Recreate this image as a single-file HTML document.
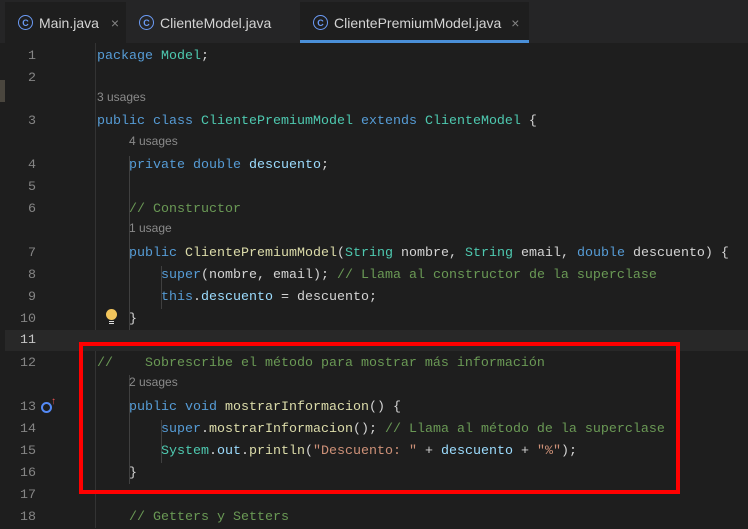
<!DOCTYPE html>
<html><head><style>
*{margin:0;padding:0;box-sizing:border-box}
body{width:748px;height:528px;overflow:hidden;background:#1e1e1e;font-family:"Liberation Mono",monospace;position:relative}
.tabs{position:absolute;left:0;top:0;width:748px;height:43px;background:#252526}
.tab{position:absolute;top:2px;height:41px;font:14px "Liberation Sans",sans-serif;color:#d4d4d4;display:flex;align-items:center}
.ic{width:15px;height:15px;border:1.5px solid #6b9bf5;border-radius:50%;color:#6b9bf5;font:bold 9px "Liberation Sans",sans-serif;display:flex;align-items:center;justify-content:center;margin-right:6px}
.row{position:absolute;left:0;width:748px;height:22px;line-height:22px;font-size:13.33px;white-space:pre;color:#d4d4d4}
.ln{position:absolute;left:0;width:36px;text-align:right;color:#858585}
.code{position:absolute;left:97px}
.u{font:12px "Liberation Sans",sans-serif;color:#8a8a8a}
.k{color:#569cd6}.c{color:#4ec9b0}.m{color:#dcdcaa}.f{color:#9cdcfe}.g{color:#6a9955}.s{color:#ce9178}
.guide{position:absolute;width:1px;background:#404040}
</style></head><body>
<div class="tabs">
<div class="tab" style="left:5px;width:121px;padding-left:13px;background:#1e1e1e"><span class="ic">C</span>Main.java<span style="color:#858585;margin-left:12px">×</span></div>
<div class="tab" style="left:139px;width:150px"><span class="ic">C</span>ClienteModel.java</div>
<div class="tab" style="left:300px;width:229px;padding-left:13px;background:#1e1e1e"><span class="ic">C</span>ClientePremiumModel.java<span style="color:#858585;margin-left:10px">×</span></div>
<div style="position:absolute;left:300px;top:40px;width:229px;height:3px;background:#4a8fd8"></div>
</div>
<div style="position:absolute;left:0;top:80px;width:5px;height:22px;background:#4a463e"></div>
<div style="position:absolute;left:95px;top:43px;width:1px;height:485px;background:#333"></div>
<div style="position:absolute;left:5px;top:330px;width:743px;height:21px;background:#282828"></div>
<div class="guide" style="left:129px;top:156px;height:174px"></div>
<div class="guide" style="left:161px;top:266px;height:43px"></div>
<div class="guide" style="left:129px;top:375px;height:109px"></div>
<div class="guide" style="left:161px;top:420px;height:43px"></div>

<div class="row" style="top:46px"><span class="ln">1</span><span class="code"><span class="k">package</span> <span class="c">Model</span>;</span></div>
<div class="row" style="top:68px"><span class="ln">2</span></div>
<div class="row" style="top:90px"><span class="code u">3 usages</span></div>
<div class="row" style="top:111px"><span class="ln">3</span><span class="code"><span class="k">public class</span> <span class="c">ClientePremiumModel</span> <span class="k">extends</span> <span class="c">ClienteModel</span> {</span></div>
<div class="row" style="top:134px"><span class="code u" style="left:129px">4 usages</span></div>
<div class="row" style="top:155px"><span class="ln">4</span><span class="code">    <span class="k">private double</span> <span class="f">descuento</span>;</span></div>
<div class="row" style="top:177px"><span class="ln">5</span></div>
<div class="row" style="top:199px"><span class="ln">6</span><span class="code">    <span class="g">// Constructor</span></span></div>
<div class="row" style="top:221px"><span class="code u" style="left:129px">1 usage</span></div>
<div class="row" style="top:243px"><span class="ln">7</span><span class="code">    <span class="k">public</span> <span class="m">ClientePremiumModel</span>(<span class="c">String</span> nombre, <span class="c">String</span> email, <span class="k">double</span> descuento) {</span></div>
<div class="row" style="top:265px"><span class="ln">8</span><span class="code">        <span class="k">super</span>(nombre, email); <span class="g">// Llama al constructor de la superclase</span></span></div>
<div class="row" style="top:287px"><span class="ln">9</span><span class="code">        <span class="k">this</span>.<span class="f">descuento</span> = descuento;</span></div>
<div class="row" style="top:309px"><span class="ln">10</span><span class="code">    }</span></div>
<div style="position:absolute;left:106px;top:309px;width:11px;height:11px;border-radius:50%;background:#f2c55c"></div>
<div style="position:absolute;left:109px;top:321px;width:5px;height:3px;border-top:1px solid #ddd;border-bottom:1px solid #ddd"></div>
<div class="row" style="top:330px"><span class="ln" style="color:#c6c6c6">11</span></div>
<div class="row" style="top:353px"><span class="ln">12</span><span class="code"><span class="g">//    Sobrescribe el método para mostrar más información</span></span></div>
<div class="row" style="top:375px"><span class="code u" style="left:129px">2 usages</span></div>
<div class="row" style="top:397px"><span class="ln">13</span><span class="code">    <span class="k">public void</span> <span class="m">mostrarInformacion</span>() {</span></div>
<div style="position:absolute;left:41px;top:402px;width:11px;height:11px;border:2px solid #548af7;border-radius:50%"></div>
<div style="position:absolute;left:51px;top:396px;color:#e55;font:10px sans-serif">↑</div>
<div class="row" style="top:419px"><span class="ln">14</span><span class="code">        <span class="k">super</span>.<span class="m">mostrarInformacion</span>(); <span class="g">// Llama al método de la superclase</span></span></div>
<div class="row" style="top:441px"><span class="ln">15</span><span class="code">        <span class="c">System</span>.<span class="f">out</span>.<span class="m">println</span>(<span class="s">"Descuento: "</span> + <span class="f">descuento</span> + <span class="s">"%"</span>);</span></div>
<div class="row" style="top:463px"><span class="ln">16</span><span class="code">    }</span></div>
<div class="row" style="top:485px"><span class="ln">17</span></div>
<div class="row" style="top:507px"><span class="ln">18</span><span class="code">    <span class="g">// Getters y Setters</span></span></div>
<div style="position:absolute;left:79px;top:342px;width:601px;height:152px;border:4px solid #ff0000"></div>
</body></html>
